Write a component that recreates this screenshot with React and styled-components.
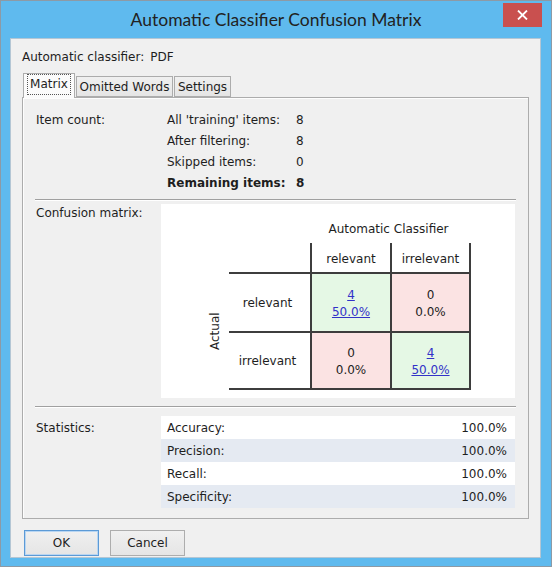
import React from "react"
import styled, { createGlobalStyle } from "styled-components"

const GlobalStyle = createGlobalStyle`
  html, body {
    margin: 0;
    padding: 0;
    background: #ffffff;
  }
  body {
    font-family: "DejaVu Sans", "Liberation Sans", sans-serif;
    font-size: 12px;
    color: #1e1e1e;
  }
  * { box-sizing: border-box; }
`

const Window = styled.div`
  width: 552px;
  height: 567px;
  display: flex;
  flex-direction: column;
  background: #5fbaee;
  border: 1px solid #8d9aa5;
`

const TitleBar = styled.div`
  height: 37px;
  display: grid;
  grid-template-columns: 48px 1fr 48px;
  align-items: center;
`

const Title = styled.div`
  grid-column: 2;
  text-align: center;
  font-family: Lato, "Open Sans", sans-serif;
  font-size: 17.5px;
  color: #222222;
  padding-bottom: 1px;
`

const CloseButton = styled.div`
  grid-column: 3;
  align-self: start;
  margin-top: 2px;
  width: 39px;
  height: 24px;
  background: #c9504f;
  display: flex;
  align-items: center;
  justify-content: center;
`

const Client = styled.div`
  flex: 1;
  margin: 0 10px 8px 9px;
  background: #f0f0f0;
  border: 1px solid #b4c6d4;
  padding: 11px 11px 0 11px;
  display: flex;
  flex-direction: column;
`

const ClassifierLabel = styled.div`
  height: 14px;
  line-height: 14px;
  display: flex;
  gap: 6px;
`

const TabStrip = styled.div`
  margin-top: 9px;
  height: 24px;
  display: flex;
  align-items: flex-end;
  gap: 1px;
  padding-left: 1px;
  position: relative;
  z-index: 1;
`

const Tab = styled.div`
  width: ${p => p.$width}px;
  height: ${p => (p.$active ? 25 : 21)}px;
  margin-bottom: ${p => (p.$active ? -1 : 0)}px;
  border: 1px solid #acacac;
  border-bottom: ${p => (p.$active ? "none" : "1px solid #acacac")};
  background: ${p => (p.$active ? "#fbfbfb" : "linear-gradient(#f0f0f0, #e5e5e5)")};
  display: flex;
  align-items: center;
  justify-content: center;
  white-space: nowrap;
  padding-bottom: ${p => (p.$active ? 3 : 0)}px;
`

const FocusText = styled.span`
  outline: 1px dotted #555;
  outline-offset: 0;
  padding: 2px 2px 3px;
  line-height: 14px;
`

const TabPanel = styled.div`
  height: 422px;
  border: 1px solid #acacac;
  background: #f0f0f0;
  box-shadow: inset 1px 1px 0 #fdfdfd;
  padding: 12px 13px 10px 13px;
  display: flex;
  flex-direction: column;
`

const Section = styled.div`
  display: grid;
  grid-template-columns: 125px 1fr;
  margin-top: ${p => p.$top || 0}px;
`

const SectionLabel = styled.div`
  line-height: ${p => p.$lh || 14}px;
  padding-top: ${p => p.$pt || 0}px;
`

const Separator = styled.div`
  margin: ${p => p.$top}px -1px 0 -1px;
  border-top: 1px solid #a0a0a0;
  border-bottom: 1px solid #ffffff;
`

const CountGrid = styled.div`
  display: grid;
  grid-template-columns: 129px auto;
  padding-left: 6px;
  line-height: 21px;
  white-space: nowrap;
`

const CountCell = styled.div`
  font-weight: ${p => (p.$bold ? "bold" : "normal")};
`

const MatrixBox = styled.div`
  background: #ffffff;
  height: 194px;
  padding-left: 39px;
`

const MatrixGrid = styled.div`
  display: grid;
  grid-template-columns: 29px 81px 80px 81px;
  grid-template-rows: 39px 29px 59px 59px;
`

const MatrixTitle = styled.div`
  grid-column: 3 / span 2;
  text-align: center;
  padding-top: 18px;
  padding-right: 4px;
  line-height: 14px;
  white-space: nowrap;
`

const HeaderCell = styled.div`
  border-left: 2px solid #3d3d3d;
  border-right: ${p => (p.$last ? "2px solid #3d3d3d" : "none")};
  display: flex;
  align-items: center;
  justify-content: center;
  padding-top: 2px;
`

const ActualLabel = styled.div`
  grid-column: 1;
  grid-row: 3 / span 2;
  display: flex;
  align-items: center;
  justify-content: center;
  writing-mode: vertical-rl;
  transform: rotate(180deg);
`

const RowLabel = styled.div`
  grid-column: 2;
  border-top: 2px solid #3d3d3d;
  border-bottom: ${p => (p.$last ? "2px solid #3d3d3d" : "none")};
  display: flex;
  align-items: center;
  justify-content: center;
  padding-right: 4px;
  padding-top: 1px;
`

const DataCell = styled.div`
  background: ${p => (p.$hit ? "#e5f8e5" : "#fbe3e3")};
  border-top: 2px solid #3d3d3d;
  border-left: 2px solid #3d3d3d;
  border-right: ${p => (p.$lastCol ? "2px solid #3d3d3d" : "none")};
  border-bottom: ${p => (p.$lastRow ? "2px solid #3d3d3d" : "none")};
  display: flex;
  flex-direction: column;
  align-items: center;
  justify-content: center;
  line-height: 17px;
  padding-top: 2px;
`

const CellLink = styled.a`
  color: #3232c8;
  text-decoration: underline;
  cursor: pointer;
`

const StatsList = styled.div`
  display: flex;
  flex-direction: column;
`

const StatRow = styled.div`
  height: 23px;
  display: flex;
  align-items: center;
  justify-content: space-between;
  padding: 1px 8px 0 6px;
  background: ${p => (p.$stripe ? "#e5eaf2" : "#ffffff")};
`

const ButtonRow = styled.div`
  display: flex;
  gap: 11px;
  margin-top: 11px;
  padding-left: 2px;
`

const Button = styled.button`
  width: 75px;
  height: 26px;
  font-family: "DejaVu Sans", "Liberation Sans", sans-serif;
  font-size: 12px;
  color: #1e1e1e;
  background: linear-gradient(#f0f0f0, #e5e5e5);
  border: 1px solid ${p => (p.$default ? "#5c9ad6" : "#adadad")};
  box-shadow: ${p => (p.$default ? "inset 0 0 0 1px #b9d6f2" : "none")};
  padding: 0;
`

const counts = [
  ["All 'training' items:", "8"],
  ["After filtering:", "8"],
  ["Skipped items:", "0"],
  ["Remaining items:", "8", true],
]

const stats = ["Accuracy:", "Precision:", "Recall:", "Specificity:"]

function Cell({ hit, value, pct, lastCol, lastRow }) {
  return (
    <DataCell $hit={hit} $lastCol={lastCol} $lastRow={lastRow}>
      {hit ? (
        <>
          <CellLink>{value}</CellLink>
          <CellLink>{pct}</CellLink>
        </>
      ) : (
        <>
          <span>{value}</span>
          <span>{pct}</span>
        </>
      )}
    </DataCell>
  )
}

export default function App() {
  return (
    <>
      <GlobalStyle />
      <Window>
        <TitleBar>
          <Title>Automatic Classifier Confusion Matrix</Title>
          <CloseButton>
            <svg width="11" height="10" viewBox="0 0 11 10">
              <path d="M1 0.5 L10 9.5 M10 0.5 L1 9.5" stroke="#fff" strokeWidth="1.8" />
            </svg>
          </CloseButton>
        </TitleBar>

        <Client>
          <ClassifierLabel>
            <span>Automatic classifier:</span>
            <span>PDF</span>
          </ClassifierLabel>

          <TabStrip>
            <Tab $active $width={52}><FocusText>Matrix</FocusText></Tab>
            <Tab $width={97}>Omitted Words</Tab>
            <Tab $width={57}>Settings</Tab>
          </TabStrip>

          <TabPanel>
            <Section>
              <SectionLabel $lh={21}>Item count:</SectionLabel>
              <CountGrid>
                {counts.map(([k, v, bold]) => (
                  <React.Fragment key={k}>
                    <CountCell $bold={bold}>{k}</CountCell>
                    <CountCell $bold={bold}>{v}</CountCell>
                  </React.Fragment>
                ))}
              </CountGrid>
            </Section>

            <Separator $top={5} />

            <Section $top={3}>
              <SectionLabel $pt={2}>Confusion matrix:</SectionLabel>
              <MatrixBox>
                <MatrixGrid>
                  <MatrixTitle>Automatic Classifier</MatrixTitle>
                  <div style={{ gridColumn: "1 / span 2" }} />
                  <HeaderCell>relevant</HeaderCell>
                  <HeaderCell $last>irrelevant</HeaderCell>
                  <ActualLabel>Actual</ActualLabel>
                  <RowLabel>relevant</RowLabel>
                  <Cell hit value="4" pct="50.0%" />
                  <Cell value="0" pct="0.0%" lastCol />
                  <RowLabel $last>irrelevant</RowLabel>
                  <Cell value="0" pct="0.0%" lastRow />
                  <Cell hit value="4" pct="50.0%" lastCol lastRow />
                </MatrixGrid>
              </MatrixBox>
            </Section>

            <Separator $top={8} />

            <Section $top={8}>
              <SectionLabel $lh={23} $pt={1}>Statistics:</SectionLabel>
              <StatsList>
                {stats.map((s, i) => (
                  <StatRow key={s} $stripe={i % 2 === 1}>
                    <span>{s}</span>
                    <span>100.0%</span>
                  </StatRow>
                ))}
              </StatsList>
            </Section>
          </TabPanel>

          <ButtonRow>
            <Button $default>OK</Button>
            <Button>Cancel</Button>
          </ButtonRow>
        </Client>
      </Window>
    </>
  )
}
